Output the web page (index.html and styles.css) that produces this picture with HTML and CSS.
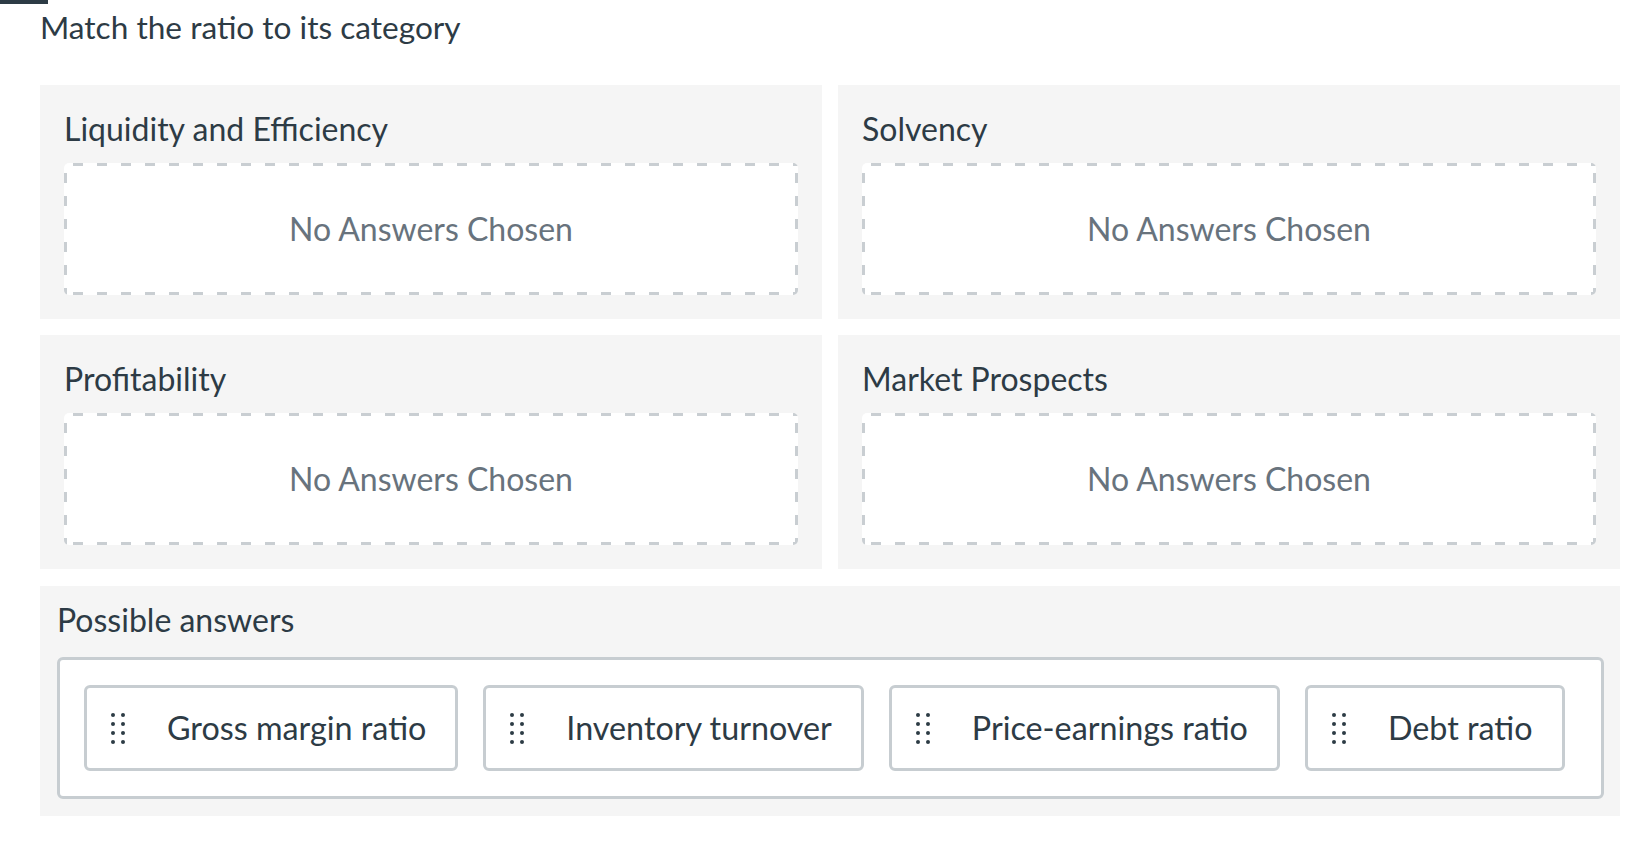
FILE: index.html
```html
<!DOCTYPE html>
<html lang="en">
<head>
<meta charset="utf-8">
<title>Match the ratio to its category</title>
<link rel="stylesheet" href="styles.css">
</head>
<body>
<div class="topbar"></div>
<main class="question">
  <h1 class="title">Match the ratio to its category</h1>
  <div class="categories">
    <section class="category">
      <h2 class="cat-title">Liquidity and Efficiency</h2>
      <div class="dropzone">No Answers Chosen</div>
    </section>
    <section class="category">
      <h2 class="cat-title">Solvency</h2>
      <div class="dropzone">No Answers Chosen</div>
    </section>
    <section class="category">
      <h2 class="cat-title">Profitability</h2>
      <div class="dropzone">No Answers Chosen</div>
    </section>
    <section class="category">
      <h2 class="cat-title">Market Prospects</h2>
      <div class="dropzone">No Answers Chosen</div>
    </section>
  </div>
  <section class="answers">
    <h2 class="answers-title">Possible answers</h2>
    <div class="pool">
      <div class="chip"><span class="handle"><i></i><i></i><i></i><i></i><i></i><i></i><i></i><i></i></span><span class="chip-text">Gross margin ratio</span></div>
      <div class="chip"><span class="handle"><i></i><i></i><i></i><i></i><i></i><i></i><i></i><i></i></span><span class="chip-text">Inventory turnover</span></div>
      <div class="chip"><span class="handle"><i></i><i></i><i></i><i></i><i></i><i></i><i></i><i></i></span><span class="chip-text">Price-earnings ratio</span></div>
      <div class="chip"><span class="handle"><i></i><i></i><i></i><i></i><i></i><i></i><i></i><i></i></span><span class="chip-text">Debt ratio</span></div>
    </div>
  </section>
</main>
</body>
</html>
```
FILE: styles.css
```css
* { box-sizing: border-box; }
html, body { margin: 0; padding: 0; background: #fff; }
body {
  font-family: Lato, "Noto Sans", sans-serif;
  color: #2d3b45;
}
.topbar {
  width: 48px;
  height: 4px;
  background: #2d3b45;
}
.question {
  padding: 0 18px 0 40px;
}
.title {
  margin: 5px 0 40px 0;
  font-size: 31.6px;
  line-height: 36px;
  font-weight: 400;
}
.categories {
  display: grid;
  grid-template-columns: 782px 782px;
  column-gap: 16px;
  row-gap: 16px;
}
.category {
  background: #f5f5f5;
  padding: 24px;
}
.cat-title {
  margin: 0 0 14px 0;
  font-size: 32px;
  line-height: 40px;
  font-weight: 400;
}
.dropzone {
  height: 132px;
  border-radius: 5px;
  background:
    linear-gradient(90deg, #c9ced2 10px, transparent 10px) 9px 0 / 24px 3px repeat-x,
    linear-gradient(90deg, #c9ced2 10px, transparent 10px) 9px 100% / 24px 3px repeat-x,
    linear-gradient(180deg, #c9ced2 10px, transparent 10px) 0 10px / 3px 23px repeat-y,
    linear-gradient(180deg, #c9ced2 10px, transparent 10px) 100% 10px / 3px 23px repeat-y,
    #fff;
  display: flex;
  align-items: center;
  justify-content: center;
  font-size: 32px;
  line-height: 38px;
  color: #68737d;
}
.answers {
  margin-top: 17px;
  width: 1580px;
  background: #f5f5f5;
  padding: 15px 16px 17px 17px;
}
.answers-title {
  margin: 0 0 18px 0;
  font-size: 32px;
  line-height: 38px;
  font-weight: 400;
}
.pool {
  background: #fff;
  border: 3px solid #c7cdd1;
  border-radius: 6px;
  padding: 25px 24px;
  display: flex;
  gap: 25px;
}
.chip {
  height: 86px;
  border: 3px solid #c7cdd1;
  border-radius: 6px;
  background: #fff;
  display: flex;
  align-items: center;
  padding: 0 29px 0 24px;
}
.handle {
  display: grid;
  grid-template-columns: 4px 4px;
  column-gap: 6px;
  row-gap: 5px;
  margin-right: 42px;
}
.handle i {
  display: block;
  width: 4px;
  height: 4px;
  border-radius: 50%;
  background: #2d3b45;
}
.chip-text {
  font-size: 32.3px;
  line-height: 38px;
  white-space: nowrap;
}
```
